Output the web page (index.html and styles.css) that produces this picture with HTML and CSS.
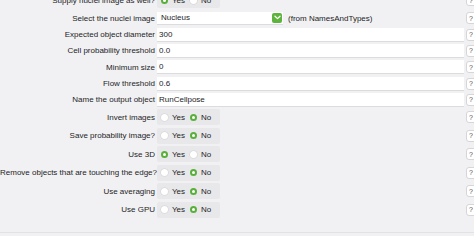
FILE: index.html
```html
<!DOCTYPE html>
<html lang="en">
<head>
    <meta charset="UTF-8">
    <title>RunCellpose settings</title>
    <link rel="stylesheet" href="styles.css">
</head>
<body>
    <div class="panel">
        <div class="row radio-row">
            <span class="name">Supply nuclei image as well?</span>
            <div class="radios"><span class="opt"><i class="dot on"></i>Yes</span><span class="opt"><i class="dot"></i>No</span></div>
            <button class="help">?</button>
        </div>

        <div class="row select-row">
            <span class="name">Select the nuclei image</span>
            <div class="control">
                <div class="select">Nucleus<span class="chevron"><svg width="7" height="5" viewBox="0 0 7 5"><path d="M1 1.2 L3.5 3.6 L6 1.2" fill="none" stroke="#fff" stroke-width="1.3" stroke-linecap="round" stroke-linejoin="round"/></svg></span></div>
                <span class="hint">(from NamesAndTypes)</span>
            </div>
            <button class="help">?</button>
        </div>

        <div class="row">
            <span class="name">Expected object diameter</span>
            <input class="text" type="text" value="300">
            <button class="help">?</button>
        </div>
        <div class="row">
            <span class="name">Cell probability threshold</span>
            <input class="text" type="text" value="0.0">
            <button class="help">?</button>
        </div>
        <div class="row">
            <span class="name">Minimum size</span>
            <input class="text" type="text" value="0">
            <button class="help">?</button>
        </div>
        <div class="row">
            <span class="name">Flow threshold</span>
            <input class="text" type="text" value="0.6">
            <button class="help">?</button>
        </div>
        <div class="row">
            <span class="name">Name the output object</span>
            <input class="text" type="text" value="RunCellpose">
            <button class="help">?</button>
        </div>

        <div class="row radio-row">
            <span class="name">Invert images</span>
            <div class="radios"><span class="opt"><i class="dot"></i>Yes</span><span class="opt"><i class="dot on"></i>No</span></div>
            <button class="help">?</button>
        </div>
        <div class="row radio-row">
            <span class="name">Save probability image?</span>
            <div class="radios"><span class="opt"><i class="dot"></i>Yes</span><span class="opt"><i class="dot on"></i>No</span></div>
            <button class="help">?</button>
        </div>
        <div class="row radio-row">
            <span class="name">Use 3D</span>
            <div class="radios"><span class="opt"><i class="dot on"></i>Yes</span><span class="opt"><i class="dot"></i>No</span></div>
            <button class="help">?</button>
        </div>
        <div class="row radio-row">
            <span class="name">Remove objects that are touching the edge?</span>
            <div class="radios"><span class="opt"><i class="dot"></i>Yes</span><span class="opt"><i class="dot on"></i>No</span></div>
            <button class="help">?</button>
        </div>
        <div class="row radio-row">
            <span class="name">Use averaging</span>
            <div class="radios"><span class="opt"><i class="dot"></i>Yes</span><span class="opt"><i class="dot on"></i>No</span></div>
            <button class="help">?</button>
        </div>
        <div class="row radio-row">
            <span class="name">Use GPU</span>
            <div class="radios"><span class="opt"><i class="dot"></i>Yes</span><span class="opt"><i class="dot on"></i>No</span></div>
            <button class="help">?</button>
        </div>
    </div>
</body>
</html>
```

FILE: styles.css
```css
html, body {
    margin: 0;
    padding: 0;
    background: #f1f1f3;
    overflow: hidden;
}
body {
    font-family: "Liberation Sans", Arial, sans-serif;
    font-size: 8px;
    color: #1d1d1f;
    width: 474px;
    height: 236px;
}
.panel {
    width: 482px;
    margin-top: -9px;
    height: 242px;
    border-bottom: 1px solid #e2e2e4;
    box-sizing: border-box;
}
.row {
    display: flex;
    align-items: center;
    height: 16.3px;
}
.select-row {
    height: 17px;
}
.radio-row {
    height: 18.5px;
}
.name {
    width: 157px;
    flex: none;
    text-align: right;
    padding-right: 2px;
    box-sizing: border-box;
    white-space: nowrap;
}
.control {
    flex: 1;
    display: flex;
    align-items: center;
}
.text {
    flex: 1;
    height: 14px;
    margin: 0;
    padding: 0 2px;
    border: none;
    border-bottom: 1px solid #dcdcde;
    background: #fff;
    font: inherit;
    color: #1d1d1f;
    box-sizing: border-box;
    outline: none;
}
.select {
    width: 126px;
    height: 13px;
    background: #fff;
    border-bottom: 1px solid #dcdcde;
    display: flex;
    align-items: center;
    justify-content: space-between;
    padding-left: 4px;
    padding-right: 1px;
    box-sizing: border-box;
}
.chevron {
    width: 10px;
    height: 10px;
    border-radius: 2px;
    background: #5db43d;
    display: flex;
    align-items: center;
    justify-content: center;
}
.hint {
    margin-left: 5px;
}
.radios {
    width: 63px;
    height: 16px;
    background: #e8e8ea;
    border-radius: 2px;
    display: flex;
    align-items: center;
    padding-left: 4px;
    box-sizing: border-box;
}
.opt {
    display: flex;
    align-items: center;
    width: 29px;
}
.dot {
    width: 7px;
    height: 7px;
    border-radius: 50%;
    background: #fff;
    box-shadow: 0 0 0 0.5px #d0d0d2;
    margin-right: 4px;
    box-sizing: border-box;
}
.dot.on {
    background: #fff;
    border: 2.2px solid #58b03a;
    box-shadow: none;
}
.help {
    flex: none;
    width: 16px;
    height: 12px;
    margin-left: 2px;
    padding: 0 0 0 2px;
    border: 1px solid #d6d6d8;
    border-radius: 3px;
    background: #fff;
    font: inherit;
    font-size: 7px;
    color: #555;
    text-align: left;
    box-sizing: border-box;
}
.radios + .help {
    margin-left: auto;
}
```
